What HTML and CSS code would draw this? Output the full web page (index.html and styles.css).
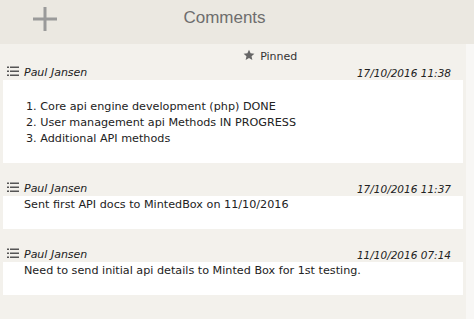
FILE: index.html
```html
<!DOCTYPE html>
<html>
  <head>
    <meta charset="utf-8">
    <title>Comments</title>
    <link rel="stylesheet" href="styles.css">
  </head>
  <body>
    <div class="topbar">
      <span class="add-btn">
        <svg width="24" height="24" viewBox="0 0 24 24"><path d="M12 0v24M0 12h24" stroke="#9a9a9a" stroke-width="3"/></svg>
      </span>
      <h1>Comments</h1>
    </div>
    <div class="main">
      <div class="comments">
        <div class="pinned">
          <svg width="12" height="12" viewBox="0 0 24 24"><path d="M12 1.5l3.2 7 7.6.8-5.7 5.1 1.6 7.5L12 18l-6.7 3.9 1.6-7.5L1.2 9.3l7.6-.8z" fill="#666"/></svg>
          Pinned
        </div>
        <div class="item">
          <div class="item-head">
            <span class="author"><svg class="menu-ico" width="12" height="11" viewBox="0 0 12 11"><g fill="#555"><rect x="0" y="0.5" width="2" height="1.5"/><rect x="3" y="0.5" width="9" height="1.5"/><rect x="0" y="4.5" width="2" height="1.5"/><rect x="3" y="4.5" width="9" height="1.5"/><rect x="0" y="8.5" width="2" height="1.5"/><rect x="3" y="8.5" width="9" height="1.5"/></g></svg>Paul Jansen</span>
            <span class="date">17/10/2016 11:38</span>
          </div>
          <div class="item-body first">
            <ol>
              <li>Core api engine development (php) DONE</li>
              <li>User management api Methods IN PROGRESS</li>
              <li>Additional API methods</li>
            </ol>
          </div>
        </div>
        <div class="item">
          <div class="item-head">
            <span class="author"><svg class="menu-ico" width="12" height="11" viewBox="0 0 12 11"><g fill="#555"><rect x="0" y="0.5" width="2" height="1.5"/><rect x="3" y="0.5" width="9" height="1.5"/><rect x="0" y="4.5" width="2" height="1.5"/><rect x="3" y="4.5" width="9" height="1.5"/><rect x="0" y="8.5" width="2" height="1.5"/><rect x="3" y="8.5" width="9" height="1.5"/></g></svg>Paul Jansen</span>
            <span class="date">17/10/2016 11:37</span>
          </div>
          <div class="item-body">Sent first API docs to MintedBox on 11/10/2016</div>
        </div>
        <div class="item">
          <div class="item-head">
            <span class="author"><svg class="menu-ico" width="12" height="11" viewBox="0 0 12 11"><g fill="#555"><rect x="0" y="0.5" width="2" height="1.5"/><rect x="3" y="0.5" width="9" height="1.5"/><rect x="0" y="4.5" width="2" height="1.5"/><rect x="3" y="4.5" width="9" height="1.5"/><rect x="0" y="8.5" width="2" height="1.5"/><rect x="3" y="8.5" width="9" height="1.5"/></g></svg>Paul Jansen</span>
            <span class="date">11/10/2016 07:14</span>
          </div>
          <div class="item-body">Need to send initial api details to Minted Box for 1st testing.</div>
        </div>
      </div>
      <div class="track"></div>
    </div>
  </body>
</html>
```

FILE: styles.css
```css
* {
  box-sizing: border-box;
  margin: 0;
  padding: 0;
}

body {
  background: #f3f1ec;
  color: #222;
  font-family: "DejaVu Sans", Verdana, sans-serif;
  font-size: 11px;
  height: 319px;
  overflow: hidden;
}

.topbar {
  height: 44px;
  background: #ebe8e1;
  display: flex;
  align-items: flex-start;
  padding: 0 26px 0 33px;
}
.add-btn {width: 24px; height: 24px; margin-top: 7px;}
.add-btn svg {display: block;}
.topbar h1 {
  flex: 1;
  text-align: center;
  font-family: "Liberation Sans", Arial, sans-serif;
  font-weight: normal;
  font-size: 17px;
  line-height: 20px;
  margin-top: 8px;
  color: #6e6e6e;
  padding-right: 56px;
}

.main {display: flex; height: 275px;}
.comments {flex: 1; padding: 0 3px;}
.track {width: 8px; background: #f8f7f5;}

.pinned {
  margin-top: 5px;
  height: 14px;
  line-height: 14px;
  text-align: center;
  color: #333;
  padding-left: 74px;
}
.pinned svg {vertical-align: -1px; margin-right: 2px;}

.item + .item {margin-top: 19px;}
.pinned + .item {margin-top: 3px;}

.item-head {
  height: 14px;
  line-height: 14px;
  display: flex;
  justify-content: space-between;
  padding: 0 12px 0 4px;
}
.author {font-style: italic; color: #222;}
.menu-ico {vertical-align: -1px; margin-right: 5px;}
.date {font-style: italic; color: #222; font-size: 10.5px;}

.item-body {
  background: #fff;
  padding: 1px 0 16px 21px;
  line-height: 16px;
  font-size: 11.2px;
}
.item-body ol {margin-top: 18px; list-style-position: inside; padding-left: 2px;}
```
